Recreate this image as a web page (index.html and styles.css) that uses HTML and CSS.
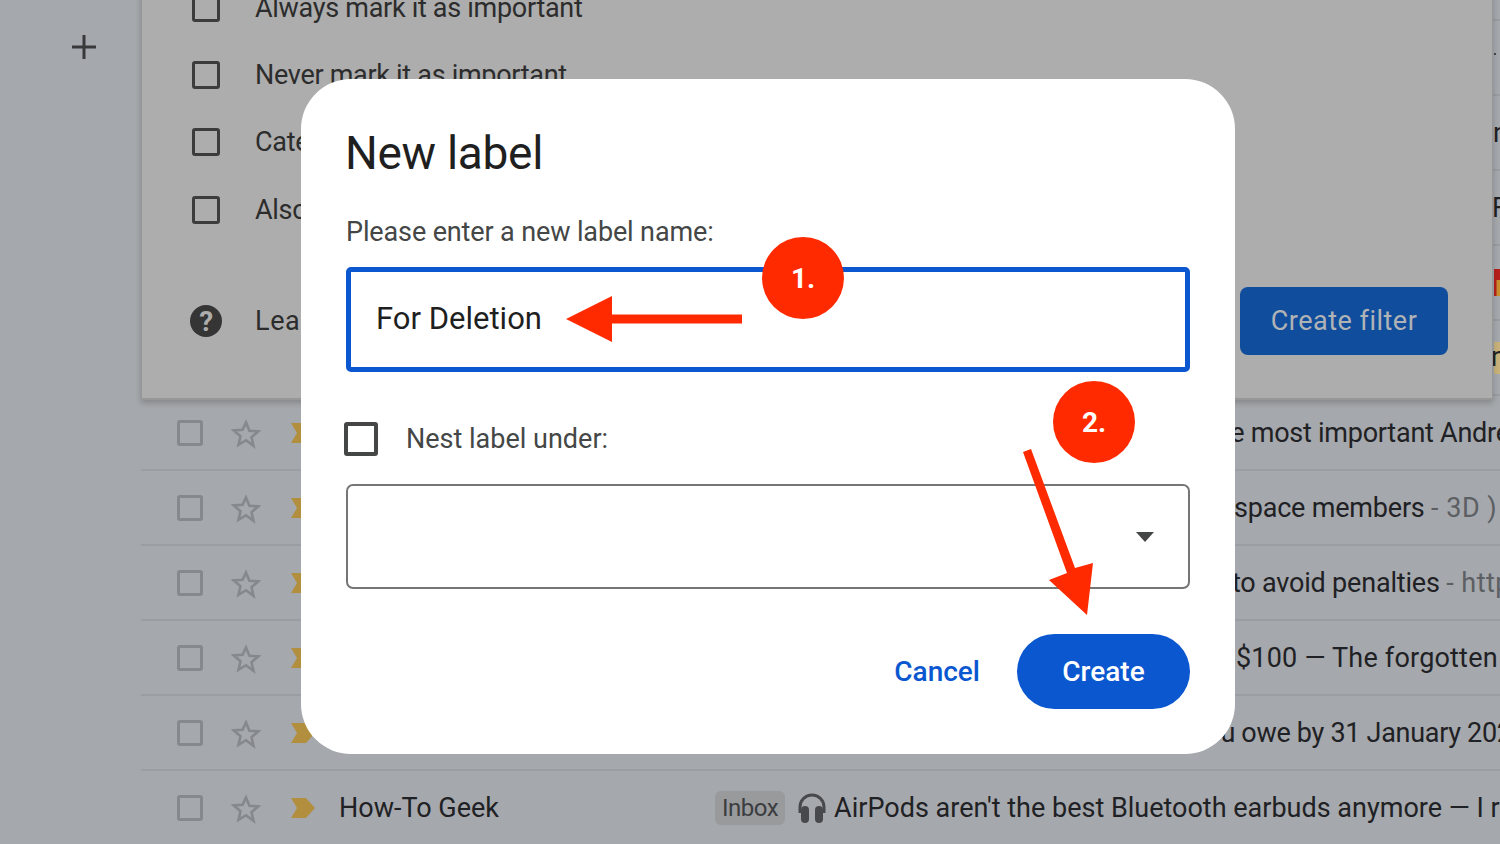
FILE: index.html
```html
<!DOCTYPE html>
<html lang="en">
<head>
<meta charset="utf-8">
<title>New label</title>
<link rel="stylesheet" href="styles.css">
</head>
<body>
<div class="app">
  <aside class="rail">
    <svg class="plus" viewBox="0 0 24 24" width="24" height="24"><path d="M12 0v24M0 12h24"/></svg>
  </aside>
  <main class="main">
    <section class="list">
      <div class="row"><span class="box"></span><svg class="star" viewBox="0 0 30 30"><path d="M15 3.5l3.4 8.2 8.8.7-6.7 5.8 2 8.6L15 21.2l-7.5 4.6 2-8.6-6.7-5.8 8.8-.7z"/></svg><svg class="tag" viewBox="0 0 24 20"><path d="M0 0h15l9 10-9 10H0l6-10z"/></svg><span class="sender"></span><span class="subject"></span></div>
      <div class="row"><span class="box"></span><svg class="star" viewBox="0 0 30 30"><path d="M15 3.5l3.4 8.2 8.8.7-6.7 5.8 2 8.6L15 21.2l-7.5 4.6 2-8.6-6.7-5.8 8.8-.7z"/></svg><svg class="tag" viewBox="0 0 24 20"><path d="M0 0h15l9 10-9 10H0l6-10z"/></svg><span class="sender"></span><span class="subject edge edge-dot"><i class="speck"></i></span></div>
      <div class="row"><span class="box"></span><svg class="star" viewBox="0 0 30 30"><path d="M15 3.5l3.4 8.2 8.8.7-6.7 5.8 2 8.6L15 21.2l-7.5 4.6 2-8.6-6.7-5.8 8.8-.7z"/></svg><svg class="tag" viewBox="0 0 24 20"><path d="M0 0h15l9 10-9 10H0l6-10z"/></svg><span class="sender"></span><span class="subject edge">n</span></div>
      <div class="row"><span class="box"></span><svg class="star" viewBox="0 0 30 30"><path d="M15 3.5l3.4 8.2 8.8.7-6.7 5.8 2 8.6L15 21.2l-7.5 4.6 2-8.6-6.7-5.8 8.8-.7z"/></svg><svg class="tag" viewBox="0 0 24 20"><path d="M0 0h15l9 10-9 10H0l6-10z"/></svg><span class="sender"></span><span class="subject edge edge-f">F</span></div>
      <div class="row"><span class="box"></span><svg class="star" viewBox="0 0 30 30"><path d="M15 3.5l3.4 8.2 8.8.7-6.7 5.8 2 8.6L15 21.2l-7.5 4.6 2-8.6-6.7-5.8 8.8-.7z"/></svg><svg class="tag" viewBox="0 0 24 20"><path d="M0 0h15l9 10-9 10H0l6-10z"/></svg><span class="sender"></span><span class="subject edge"><svg class="gift" viewBox="0 0 27 27"><rect y="0" width="27" height="11" fill="#b5201c"/><rect y="11" width="27" height="16" fill="#c98f2e"/><rect width="2.500" height="27" fill="#b5201c"/></svg></span></div>
      <div class="row"><span class="box"></span><svg class="star" viewBox="0 0 30 30"><path d="M15 3.5l3.4 8.2 8.8.7-6.7 5.8 2 8.6L15 21.2l-7.5 4.6 2-8.6-6.7-5.8 8.8-.7z"/></svg><svg class="tag" viewBox="0 0 24 20"><path d="M0 0h15l9 10-9 10H0l6-10z"/></svg><span class="sender"></span><span class="subject edge"><span class="edge-chip">n</span></span></div>
      <div class="row"><span class="box"></span><svg class="star" viewBox="0 0 30 30"><path d="M15 3.5l3.4 8.2 8.8.7-6.7 5.8 2 8.6L15 21.2l-7.5 4.6 2-8.6-6.7-5.8 8.8-.7z"/></svg><svg class="tag" viewBox="0 0 24 20"><path d="M0 0h15l9 10-9 10H0l6-10z"/></svg><span class="sender"></span><span class="subject off-1">the most important Andrew news</span></div>
      <div class="row"><span class="box"></span><svg class="star" viewBox="0 0 30 30"><path d="M15 3.5l3.4 8.2 8.8.7-6.7 5.8 2 8.6L15 21.2l-7.5 4.6 2-8.6-6.7-5.8 8.8-.7z"/></svg><svg class="tag" viewBox="0 0 24 20"><path d="M0 0h15l9 10-9 10H0l6-10z"/></svg><span class="sender"></span><span class="subject off-2">space members <span class="snippet">- 3D )</span></span></div>
      <div class="row"><span class="box"></span><svg class="star" viewBox="0 0 30 30"><path d="M15 3.5l3.4 8.2 8.8.7-6.7 5.8 2 8.6L15 21.2l-7.5 4.6 2-8.6-6.7-5.8 8.8-.7z"/></svg><svg class="tag" viewBox="0 0 24 20"><path d="M0 0h15l9 10-9 10H0l6-10z"/></svg><span class="sender"></span><span class="subject off-3">to avoid penalties <span class="snippet">- https://www</span></span></div>
      <div class="row"><span class="box"></span><svg class="star" viewBox="0 0 30 30"><path d="M15 3.5l3.4 8.2 8.8.7-6.7 5.8 2 8.6L15 21.2l-7.5 4.6 2-8.6-6.7-5.8 8.8-.7z"/></svg><svg class="tag" viewBox="0 0 24 20"><path d="M0 0h15l9 10-9 10H0l6-10z"/></svg><span class="sender"></span><span class="subject off-4">$100 — The forgotten gadget</span></div>
      <div class="row"><span class="box"></span><svg class="star" viewBox="0 0 30 30"><path d="M15 3.5l3.4 8.2 8.8.7-6.7 5.8 2 8.6L15 21.2l-7.5 4.6 2-8.6-6.7-5.8 8.8-.7z"/></svg><svg class="tag" viewBox="0 0 24 20"><path d="M0 0h15l9 10-9 10H0l6-10z"/></svg><span class="sender"></span><span class="subject off-5">you owe by 31 January 2025</span></div>
      <div class="row"><span class="box"></span><svg class="star" viewBox="0 0 30 30"><path d="M15 3.5l3.4 8.2 8.8.7-6.7 5.8 2 8.6L15 21.2l-7.5 4.6 2-8.6-6.7-5.8 8.8-.7z"/></svg><svg class="tag" viewBox="0 0 24 20"><path d="M0 0h15l9 10-9 10H0l6-10z"/></svg><span class="sender">How-To Geek</span><span class="subject"><span class="chip">Inbox</span><svg class="phones" viewBox="0 0 28 30"><path class="band" d="M2 20v-6a12 12 0 0 1 24 0v6"/><rect class="cup" x="3" y="13" width="8" height="17" rx="4"/><rect class="cup" x="17" y="13" width="8" height="17" rx="4"/></svg>AirPods aren't the best Bluetooth earbuds anymore — I really like these</span></div>
    </section>

    <section class="panel">
      <div class="opt"><span class="pbox"></span><span>Always mark it as important</span></div>
      <div class="opt"><span class="pbox"></span><span>Never mark it as important</span></div>
      <div class="opt"><span class="pbox"></span><span>Categorize as</span></div>
      <div class="opt"><span class="pbox"></span><span>Also apply filter</span></div>
      <div class="panel-foot">
        <svg class="help" viewBox="0 0 32 32"><circle cx="16" cy="16" r="16"/><text x="16" y="26" text-anchor="middle">?</text></svg>
        <span class="learn">Learn more</span>
        <span class="filter-btn">Create filter</span>
      </div>
    </section>
  </main>
</div>

<section class="dialog">
  <h1 class="title">New label</h1>
  <p class="prompt">Please enter a new label name:</p>
  <div class="input">For Deletion</div>
  <div class="nest"><span class="dbox"></span><span>Nest label under:</span></div>
  <div class="select"><svg class="caret" viewBox="0 0 18 10"><path d="M0 0h18l-9 10z"/></svg></div>
  <div class="actions"><span class="cancel">Cancel</span><span class="create">Create</span></div>
</section>

<svg class="marks" viewBox="0 0 1500 844" width="1500" height="844">
  <path d="M742 314.500V323.500H612V342L566 319 612 296V314.500Z"/>
  <path d="M1023 452L1031 449 1075 568 1093 563 1087 615 1049 580 1067 573Z"/>
</svg>
<span class="step step-1">1.</span>
<span class="step step-2">2.</span>
</body>
</html>
```
FILE: styles.css
```css
* { box-sizing: border-box; }
html, body { margin: 0; height: 844px; overflow: hidden; }
body { font-family: Roboto, "Liberation Sans", sans-serif; background: #a5a8ac; color: #1f2124; position: relative; }

.app { display: grid; grid-template-columns: 141px 1fr; height: 844px; overflow: hidden; }
.rail { padding: 35px 0 0 72px; }
.plus { display: block; fill: none; stroke: #38393b; stroke-width: 3; }

.main { position: relative; }
.list { margin-top: -54px; }
.row { display: grid; grid-template-columns: 90px 60px 48px 376px 1fr; height: 75px; align-items: center; border-bottom: 2px solid #9a9da1; font-size: 27px; white-space: nowrap; }
.box { width: 26px; height: 26px; margin-left: 36px; border: 3px solid #85888c; border-radius: 3px; }
.star { width: 30px; height: 30px; margin-top: 2px; fill: none; stroke: #85888c; stroke-width: 2.6; }
.tag { width: 24px; height: 20px; fill: #b18f3f; }
.sender { overflow: hidden; }
.subject { display: flex; align-items: center; overflow: hidden; white-space: pre; }
.snippet { color: #5c5f63; letter-spacing: .5px; }
.off-1 { padding-left: 492px; letter-spacing: -.25px; }
.off-2 { padding-left: 519px; letter-spacing: -.2px; }
.off-3 { padding-left: 517px; letter-spacing: -.2px; }
.off-4 { padding-left: 521px; letter-spacing: .2px; }
.off-5 { padding-left: 478px; letter-spacing: -.3px; }
.chip { display: inline-flex; align-items: center; height: 34px; padding: 0 7px; margin-right: 13px; font-size: 24px; letter-spacing: -.5px; border-radius: 6px; background: #999a9c; color: #3b3d40; }
.phones { width: 28px; height: 30px; margin-right: 8px; flex: none; }
.band { fill: none; stroke: #47494c; stroke-width: 3; }
.cup { fill: #47494c; }

.edge { padding-left: 778px; }
.edge-dot { height: 30px; align-items: flex-start; }
.speck { display: block; width: 2px; height: 2px; margin: 10px 0 0 1px; background: #44474a; }
.edge-f { padding-left: 777px; }
.gift { width: 27px; height: 27px; margin-left: 1px; flex: none; }
.edge-chip { display: block; height: 32px; margin-left: 1px; width: 30px; line-height: 30px; background: #c8b27a; text-indent: -3px; }

.panel { position: absolute; left: 0; top: -40px; width: 1352px; height: 440px; padding: 14px 0 0 50px; background: #adadad; border-right: 1px solid #979797; border-bottom: 2px solid #979797; border-left: 1px solid #979797; box-shadow: 0 3px 6px rgba(0,0,0,.2); font-size: 27px; letter-spacing: -.3px; color: #2c2c2c; }
.opt { display: flex; align-items: center; gap: 35px; height: 67.300px; }
.pbox { width: 28px; height: 28px; border: 3.500px solid #3c3c3c; border-radius: 3px; }
.panel-foot { display: flex; align-items: center; margin-top: 44px; padding-right: 44px; }
.help { width: 32px; height: 32px; margin-left: -2px; fill: #353535; }
.help text { fill: #adadad; font-size: 28px; font-weight: 700; font-family: Roboto, sans-serif; }
.learn { margin-left: 33px; letter-spacing: .6px; }
.filter-btn { margin-left: auto; width: 208px; height: 68px; display: flex; align-items: center; justify-content: center; border-radius: 8px; background: #104d9c; color: #b0b3b6; letter-spacing: .5px; }

.dialog { position: absolute; left: 301px; top: 79px; width: 934px; height: 675px; padding: 46px 45px 45px; background: #fff; border-radius: 50px; }
.title { margin: 0 0 0 -1px; font-size: 46px; font-weight: 400; line-height: 56px; letter-spacing: -.3px; color: #1f1f1f; }
.prompt { margin: 33px 0 0; font-size: 27px; line-height: 36px; letter-spacing: -.13px; color: #444746; }
.input { height: 105px; margin-top: 17px; padding-left: 25px; padding-bottom: 2px; display: flex; align-items: center; border: 5px solid #0b57d0; border-radius: 5px; font-size: 31px; color: #1f1f1f; }
.nest { display: flex; align-items: center; gap: 28px; margin: 50px 0 0 -2px; font-size: 27px; color: #444746; }
.dbox { width: 34px; height: 34px; border: 4px solid #444746; border-radius: 3px; }
.select { height: 105px; margin-top: 28px; display: flex; align-items: center; justify-content: flex-end; padding-right: 34px; border: 2px solid #747775; border-radius: 7px; }
.caret { width: 18px; height: 10px; fill: #444746; }
.actions { display: flex; align-items: center; justify-content: flex-end; gap: 37px; margin-top: 45px; font-size: 28px; font-weight: 500; }
.cancel { color: #0b57d0; }
.create { width: 173px; height: 75px; display: flex; align-items: center; justify-content: center; border-radius: 38px; background: #0b57d0; color: #fff; }

.marks { position: absolute; left: 0; top: 0; fill: #ff2a00; pointer-events: none; }
.step { position: absolute; width: 82px; height: 82px; display: flex; align-items: center; justify-content: center; border-radius: 50%; background: #ff2a00; color: #fff; font-size: 28px; font-weight: 700; }
.step-1 { left: 762px; top: 237px; }
.step-2 { left: 1053px; top: 381px; }
```
